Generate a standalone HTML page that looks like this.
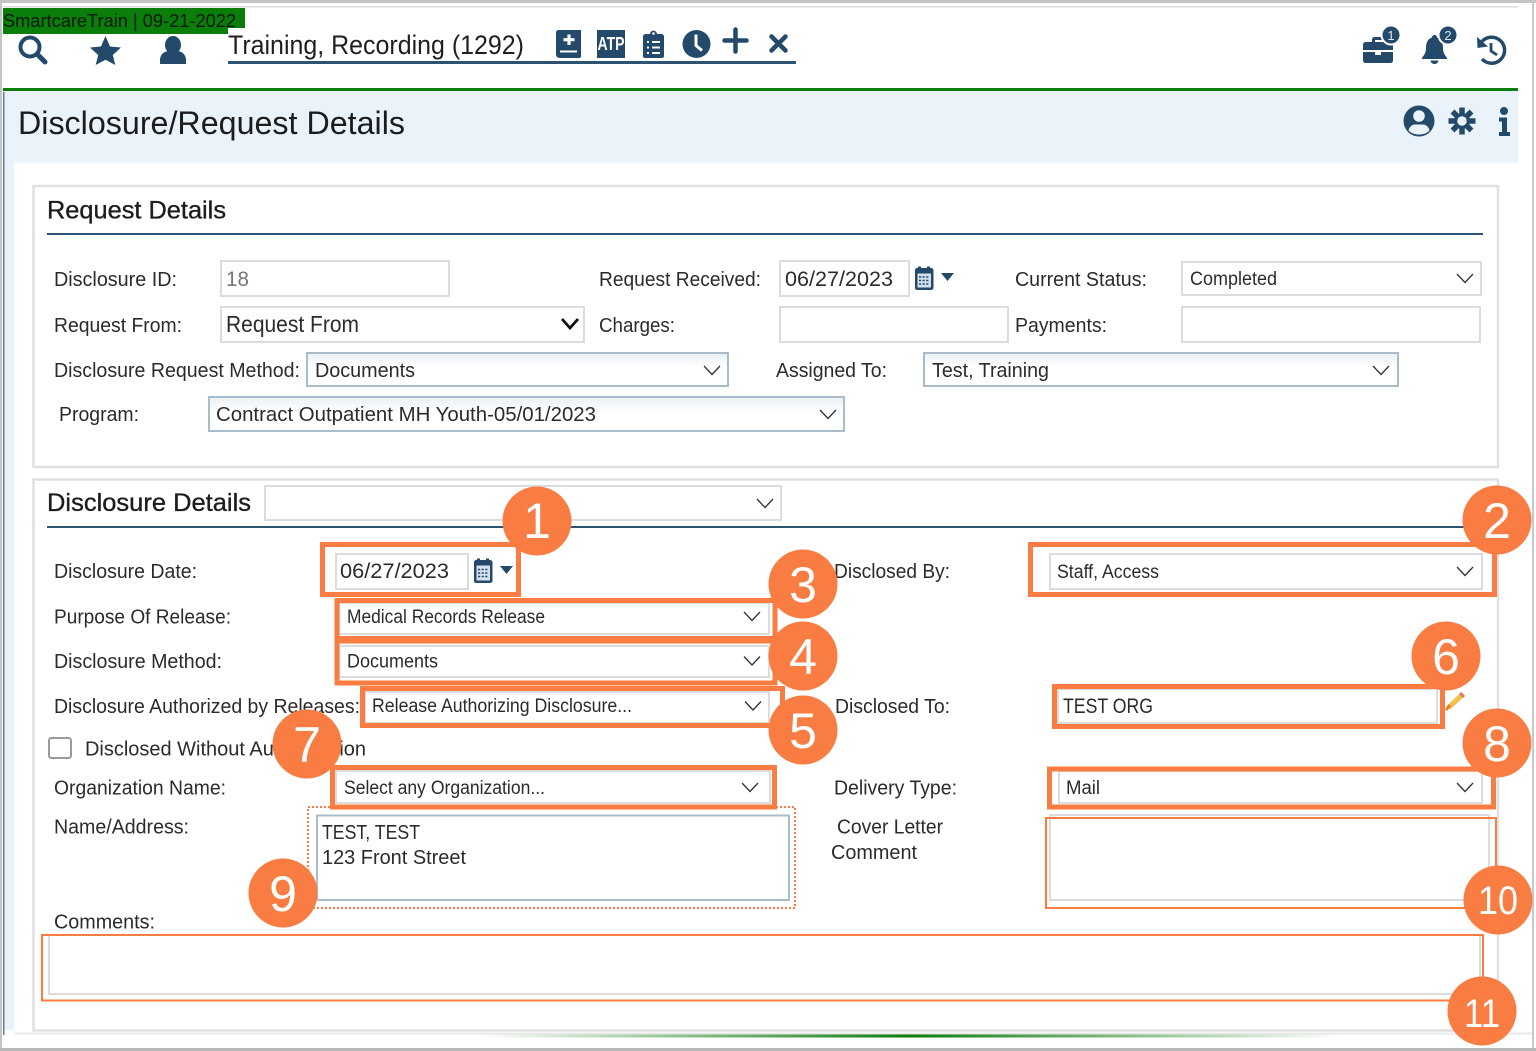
<!DOCTYPE html>
<html lang="en">
<head>
<meta charset="utf-8">
<title>Disclosure/Request Details</title>
<style>
html,body{margin:0;padding:0;background:#fff;width:1536px;height:1051px;overflow:hidden}
svg{display:block}
text{font-family:"Liberation Sans",Arial,sans-serif;fill:#2b2b2b;font-size:20px}
.v{font-size:19px}
.big{font-size:21px}
.n{fill:#fff;font-size:50px;text-anchor:middle}
.h{font-size:25px;fill:#1c1c1c;stroke:#1c1c1c;stroke-width:.35}
.g{fill:#fff;stroke:#dcdcdc;stroke-width:2}
.b{fill:url(#grad);stroke:#a9bccb;stroke-width:2}
.c{fill:none;stroke:#333;stroke-width:1.3}
.o{fill:none;stroke:#f97d42;stroke-width:5}
.o2{fill:none;stroke:#f97d42;stroke-width:2}
.d{fill:#234a6b}
.ds{fill:none;stroke:#234a6b}
</style>
</head>
<body>
<svg width="1536" height="1051" viewBox="0 0 1536 1051" xmlns="http://www.w3.org/2000/svg">
<defs>
<linearGradient id="grad" x1="0" y1="0" x2="0" y2="1"><stop offset="0" stop-color="#eaf0f5"/><stop offset=".45" stop-color="#fff"/></linearGradient>
<linearGradient id="bar" x1="0" y1="0" x2="1" y2="0"><stop offset="0" stop-color="#0a7d0a" stop-opacity="0"/><stop offset=".5" stop-color="#0a7d0a"/><stop offset="1" stop-color="#0a7d0a" stop-opacity="0"/></linearGradient>
</defs>

<!-- frame -->
<rect width="1536" height="1051" fill="#fff"/>
<rect x="0" y="0" width="1536" height="3" fill="#c4c4c4"/>
<rect x="3" y="6" width="1515" height="1.5" fill="#dedede"/>
<rect x="0" y="0" width="2" height="1051" fill="#c4c4c4"/>
<rect x="1532" y="0" width="2" height="1051" fill="#c8c8c8"/>
<rect x="0" y="1048" width="1536" height="3" fill="#b8b8b8"/>

<!-- green env tag -->
<rect x="3" y="8" width="242" height="20" fill="#0a7d0a"/>
<rect x="3" y="28" width="225" height="6" fill="#0a7d0a"/>
<text x="3" y="27" textLength="233" lengthAdjust="spacingAndGlyphs" style="font-size:18px;fill:#071a07">SmartcareTrain | 09-21-2022</text>

<!-- left nav icons -->
<circle cx="30" cy="47" r="9.5" class="ds" stroke-width="4"/>
<path d="M37 54L45 62" class="ds" stroke-width="5" stroke-linecap="round"/>
<path class="d" d="M105.500 36L110 46.500L121 47.500L112.800 55L115.300 65L105.500 59.800L95.700 65L98.200 55L90 47.500L101 46.500Z"/>
<ellipse cx="173" cy="45" rx="8" ry="9" class="d"/>
<path class="d" d="M160 64V60C160 54 165 51 169 51H177C181 51 186 54 186 60V64Z"/>

<!-- patient title -->
<text x="228" y="54" textLength="296" lengthAdjust="spacingAndGlyphs" style="font-size:27px;fill:#1f1f1f">Training, Recording (1292)</text>
<rect x="228" y="61" width="568" height="3" fill="#2d5373"/>

<!-- book plus -->
<path class="d" d="M559 30H581V56C581 57.500 580 58 579 58H560C557.500 58 556 56.500 556 54V33C556 31 557 30 559 30Z"/>
<path d="M569 34.500V45M563.500 39.700H574.500" stroke="#fff" stroke-width="3.200" fill="none"/>
<path d="M560 51.500H577" stroke="#fff" stroke-width="2" fill="none"/>
<!-- ATP -->
<rect x="597" y="30" width="28" height="28" class="d"/>
<text x="611" y="50" text-anchor="middle" textLength="27" lengthAdjust="spacingAndGlyphs" style="font-size:18px;font-weight:bold;fill:#fff">ATP</text>
<!-- clipboard -->
<path class="d" d="M646 34H650C650.500 29.500 656.500 29.500 657 34H661C663 34 664 35 664 37V56C664 57.500 663 58 661.500 58H645.500C644 58 643 57.500 643 56V37C643 35 644 34 646 34Z"/>
<path d="M647 42H649M652 42H660M647 47.500H649M652 47.500H660M647 53H649M652 53H660" stroke="#fff" stroke-width="2" fill="none"/>
<circle cx="653.500" cy="33.500" r="1.300" fill="#fff"/>
<!-- clock -->
<circle cx="696.500" cy="44" r="14" class="d"/>
<path d="M696 34.500V45.500L702 50.500" stroke="#fff" stroke-width="3" fill="none"/>
<!-- plus / x -->
<path d="M735.500 29.500V51.500M724.500 40.500H746.500" class="ds" stroke-width="4.500" stroke-linecap="round"/>
<path d="M771.500 36.500L785.500 50.500M785.500 36.500L771.500 50.500" class="ds" stroke-width="4.500" stroke-linecap="round"/>

<!-- right icons -->
<path class="d" d="M1372 42V40C1372 38 1373 37 1375 37H1384C1386 37 1387 38 1387 40V42H1390C1392 42 1393 43 1393 45V50H1363V45C1363 43 1364 42 1366 42ZM1375 42H1384V40H1375Z" fill-rule="evenodd"/>
<path class="d" d="M1363 52H1375V55H1381V52H1393V60C1393 62 1392 63 1390 63H1366C1364 63 1363 62 1363 60Z"/>
<circle cx="1391" cy="35" r="10.500" fill="#fff"/><circle cx="1391" cy="35" r="8.500" class="d"/>
<text x="1391" y="40" text-anchor="middle" style="font-size:13px;fill:#dfe8ef">1</text>
<path class="d" d="M1434.500 35C1436 35 1437 36 1437 37.500C1442 39 1443 44 1443 48C1443 53 1445 55 1447 58V59H1422V58C1424 55 1426 53 1426 48C1426 44 1427 39 1432 37.500C1432 36 1433 35 1434.500 35Z"/>
<path class="d" d="M1430.500 60.500H1438.500C1438 63 1436.500 64 1434.500 64C1432.500 64 1431 63 1430.500 60.500Z"/>
<circle cx="1448" cy="35" r="10.500" fill="#fff"/><circle cx="1448" cy="35" r="8.500" class="d"/>
<text x="1448" y="40" text-anchor="middle" style="font-size:13px;fill:#dfe8ef">2</text>
<path d="M1481.500 42A13 13 0 1 1 1482 59" class="ds" stroke-width="3.500"/>
<path class="d" d="M1477 37L1488 46.500L1477.500 48Z"/>
<path d="M1491 43V51L1497 55" class="ds" stroke-width="2.800"/>

<!-- green rule + blue header -->
<rect x="3" y="88" width="1515" height="3" fill="#0a7d0a"/>
<rect x="3" y="91" width="1515" height="71.500" fill="#eaf2fa"/>
<rect x="4" y="162" width="10" height="868" fill="#eaf2fa"/>
<rect x="3" y="92" width="1.500" height="943" fill="#5d7e97"/>
<text x="18" y="134" textLength="387" lengthAdjust="spacingAndGlyphs" style="font-size:32px;fill:#1c1c1c">Disclosure/Request Details</text>

<!-- page icons -->
<circle cx="1419" cy="121" r="15.500" class="d"/>
<circle cx="1419" cy="116" r="5.800" fill="#eaf2fa"/>
<path fill="#eaf2fa" d="M1408.500 130.500C1409.500 126 1413 124.500 1415 124.500H1423C1425 124.500 1428.500 126 1429.500 130.500C1426.500 133.500 1423 134.500 1419 134.500C1415 134.500 1411.500 133.500 1408.500 130.500Z"/>
<circle cx="1462" cy="121" r="8" class="d"/>
<path d="M1462 107.500V134.500M1448.500 121H1475.500M1452.500 111.500L1471.500 130.500M1471.500 111.500L1452.500 130.500" class="ds" stroke-width="5.500"/>
<circle cx="1462" cy="121" r="4.800" fill="#eaf2fa"/>
<circle cx="1504" cy="111" r="4" class="d"/>
<path class="d" d="M1499 117.500H1507V132H1510V136H1499V132H1502V121.500H1499Z"/>

<!-- panels -->
<rect x="33.500" y="186" width="1464.500" height="281" fill="#fff" stroke="#e0e0e0" stroke-width="2.500"/>
<rect x="33.500" y="479.500" width="1464.500" height="551" fill="#fff" stroke="#e0e0e0" stroke-width="2.500"/>
<rect x="14" y="1032.500" width="1518" height="2" fill="#e8e8e8"/>
<rect x="480" y="1034.500" width="860" height="3" fill="url(#bar)"/>

<text class="h" x="47" y="218.500" textLength="179" lengthAdjust="spacingAndGlyphs">Request Details</text>
<rect x="47" y="233" width="1436" height="2" fill="#2d5373"/>
<text class="h" x="47" y="511" textLength="204" lengthAdjust="spacingAndGlyphs">Disclosure Details</text>
<rect x="47" y="526" width="1451" height="2" fill="#2d5373"/>

<!-- Request details row 1 -->
<text x="54" y="286" textLength="123" lengthAdjust="spacingAndGlyphs">Disclosure ID:</text>
<rect class="g" x="221" y="261" width="228" height="35"/>
<text x="226" y="286" textLength="23" lengthAdjust="spacingAndGlyphs" class="big" style="fill:#777">18</text>
<text x="599" y="286" textLength="162" lengthAdjust="spacingAndGlyphs">Request Received:</text>
<rect class="g" x="780" y="261" width="129" height="35"/>
<text x="785" y="286" textLength="108" lengthAdjust="spacingAndGlyphs" class="big">06/27/2023</text>
<path class="d" d="M915 270C915 269 916 268 917 268H918V266.500H921V268H927V266.500H930V268H931C932 268 933.500 269 933.500 270V288C933.500 289 932 290 931 290H917C916 290 915 289 915 288Z"/>
<rect x="917.500" y="273.500" width="13.500" height="14" fill="#d5e0ea"/>
<path d="M919 277H929.500M919 280.500H929.500M919 284H929.500" stroke="#234a6b" stroke-width="1.600" stroke-dasharray="2.200 1.400" fill="none"/>
<path class="d" d="M941 273H954L947.500 281Z"/>
<text x="1015" y="286" textLength="132" lengthAdjust="spacingAndGlyphs">Current Status:</text>
<rect class="g" x="1182" y="262" width="299" height="33"/>
<text x="1190" y="285" textLength="87" lengthAdjust="spacingAndGlyphs" class="v">Completed</text>
<path class="c" d="M1457 274L1465 282.500L1473 274"/>

<!-- row 2 -->
<text x="54" y="332" textLength="128" lengthAdjust="spacingAndGlyphs">Request From:</text>
<rect class="g" x="221" y="307" width="363" height="35"/>
<text x="226" y="332" textLength="133" lengthAdjust="spacingAndGlyphs" style="font-size:23px">Request From</text>
<path d="M562 319L570 328L578 319" fill="none" stroke="#111" stroke-width="2.800"/>
<text x="599" y="332" textLength="76" lengthAdjust="spacingAndGlyphs">Charges:</text>
<rect class="g" x="780" y="307" width="228" height="35"/>
<text x="1015" y="332" textLength="92" lengthAdjust="spacingAndGlyphs">Payments:</text>
<rect class="g" x="1182" y="307" width="298" height="35"/>

<!-- row 3 -->
<text x="54" y="377" textLength="246" lengthAdjust="spacingAndGlyphs">Disclosure Request Method:</text>
<rect class="b" x="307" y="353" width="421" height="33"/>
<text x="315" y="377" textLength="100" lengthAdjust="spacingAndGlyphs">Documents</text>
<path class="c" d="M704 366L712 374.500L720 366"/>
<text x="776" y="377" textLength="111" lengthAdjust="spacingAndGlyphs">Assigned To:</text>
<rect class="b" x="924" y="353" width="474" height="33"/>
<text x="932" y="377" textLength="117" lengthAdjust="spacingAndGlyphs">Test, Training</text>
<path class="c" d="M1373 366L1381 374.500L1389 366"/>

<!-- row 4 -->
<text x="59" y="421" textLength="80" lengthAdjust="spacingAndGlyphs">Program:</text>
<rect class="b" x="209" y="397" width="635" height="34"/>
<text x="216" y="421" textLength="380" lengthAdjust="spacingAndGlyphs">Contract Outpatient MH Youth-05/01/2023</text>
<path class="c" d="M820 410L828 418.500L836 410"/>

<!-- Disclosure select -->
<rect class="g" x="265" y="486" width="516" height="34"/>
<path class="c" d="M757 499L765 507.500L773 499"/>

<!-- Disclosure date -->
<text x="54" y="578" textLength="143" lengthAdjust="spacingAndGlyphs">Disclosure Date:</text>
<rect class="g" x="336" y="554" width="132" height="35"/>
<text x="340" y="578" textLength="109" lengthAdjust="spacingAndGlyphs" class="big">06/27/2023</text>
<path class="d" d="M474 562C474 561 475 560 476 560H477V558.500H480V560H486V558.500H489V560H490C491 560 492.500 561 492.500 562V581C492.500 582 491 583 490 583H476C475 583 474 582 474 581Z"/>
<rect x="476.500" y="565.500" width="13.500" height="15" fill="#d5e0ea"/>
<path d="M478 569.500H488.500M478 573H488.500M478 576.500H488.500" stroke="#234a6b" stroke-width="1.600" stroke-dasharray="2.200 1.400" fill="none"/>
<path class="d" d="M500 566H513L506.500 574Z"/>

<text x="834" y="578" textLength="116" lengthAdjust="spacingAndGlyphs">Disclosed By:</text>
<rect class="g" x="1050" y="554" width="432" height="35"/>
<text x="1057" y="578" textLength="102" lengthAdjust="spacingAndGlyphs" class="v">Staff, Access</text>
<path class="c" d="M1457 567L1465 575.500L1473 567"/>

<!-- Purpose / method / authorised -->
<text x="54" y="623.500" textLength="177" lengthAdjust="spacingAndGlyphs">Purpose Of Release:</text>
<rect class="g" x="339" y="603" width="430" height="31"/>
<text x="347" y="623" textLength="198" lengthAdjust="spacingAndGlyphs" class="v">Medical Records Release</text>
<path class="c" d="M744 612L752 620.500L760 612"/>

<text x="54" y="668" textLength="168" lengthAdjust="spacingAndGlyphs">Disclosure Method:</text>
<rect class="g" x="339" y="646" width="430" height="31"/>
<text x="347" y="667.500" textLength="91" lengthAdjust="spacingAndGlyphs" class="v">Documents</text>
<path class="c" d="M744 656.500L752 665L760 656.500"/>

<text x="54" y="713" textLength="306" lengthAdjust="spacingAndGlyphs">Disclosure Authorized by Releases:</text>
<rect class="g" x="365" y="692" width="404" height="31"/>
<text x="372" y="712" textLength="260" lengthAdjust="spacingAndGlyphs" class="v">Release Authorizing Disclosure...</text>
<path class="c" d="M745 701.500L753 710L761 701.500"/>

<text x="835" y="713" textLength="115" lengthAdjust="spacingAndGlyphs">Disclosed To:</text>
<rect class="g" x="1058" y="689" width="379" height="34"/>
<text x="1063" y="713" textLength="90" lengthAdjust="spacingAndGlyphs" class="big">TEST ORG</text>
<path d="M1448 708L1462 695" stroke="#f2c24a" stroke-width="5" fill="none"/>
<path d="M1460 693L1464 697" stroke="#d97a5a" stroke-width="3" fill="none"/>
<path d="M1446 710L1450 705" stroke="#d9803f" stroke-width="3" fill="none"/>

<!-- checkbox -->
<rect x="49" y="738" width="22" height="20" rx="2.500" fill="#fff" stroke="#9a9a9a" stroke-width="2"/>
<text x="85" y="755.500" textLength="281" lengthAdjust="spacingAndGlyphs">Disclosed Without Authorization</text>

<!-- Organisation / delivery -->
<text x="54" y="794.500" textLength="172" lengthAdjust="spacingAndGlyphs">Organization Name:</text>
<rect class="g" x="336" y="771" width="434" height="32"/>
<text x="344" y="794" textLength="201" lengthAdjust="spacingAndGlyphs" class="v">Select any Organization...</text>
<path class="c" d="M742 783L750 791.500L758 783"/>

<text x="834" y="794.500" textLength="123" lengthAdjust="spacingAndGlyphs">Delivery Type:</text>
<rect class="g" x="1059" y="771" width="423" height="32"/>
<text x="1066" y="794" textLength="34" lengthAdjust="spacingAndGlyphs" class="v">Mail</text>
<path class="c" d="M1457 783L1465 791.500L1473 783"/>

<!-- Name / address -->
<text x="54" y="833.500" textLength="135" lengthAdjust="spacingAndGlyphs">Name/Address:</text>
<rect x="317" y="815.500" width="472" height="84.500" fill="#fff" stroke="#a9bccb" stroke-width="2"/>
<text x="322" y="839" textLength="98" lengthAdjust="spacingAndGlyphs">TEST, TEST</text>
<text x="322" y="864" textLength="144" lengthAdjust="spacingAndGlyphs">123 Front Street</text>
<rect x="308" y="807" width="487" height="101" fill="none" stroke="#f97d42" stroke-width="2" stroke-dasharray="2 2"/>

<text x="837" y="833.500" textLength="106" lengthAdjust="spacingAndGlyphs">Cover Letter</text>
<text x="831" y="859" textLength="86" lengthAdjust="spacingAndGlyphs">Comment</text>
<rect class="g" x="1050" y="815" width="439" height="85"/>

<text x="54" y="928.500" textLength="101" lengthAdjust="spacingAndGlyphs">Comments:</text>
<rect class="g" x="49" y="935" width="1431" height="59"/>

<!-- orange highlight boxes -->
<rect class="o" x="322.500" y="544.500" width="196" height="50"/>
<rect class="o" x="1030.500" y="544.500" width="464" height="50"/>
<rect class="o" x="337" y="600.500" width="438" height="38"/>
<rect class="o" x="337" y="641" width="438" height="42"/>
<rect class="o" x="362.500" y="688.500" width="420" height="37"/>
<rect class="o" x="1054.500" y="686.500" width="388" height="40"/>
<rect class="o" x="332.500" y="767.500" width="442" height="39.500"/>
<rect class="o" x="1049.500" y="769" width="444" height="38"/>
<rect class="o2" x="1046" y="818" width="450" height="90"/>
<rect class="o2" x="42" y="935" width="1441" height="65.500"/>

<!-- numbered circles -->
<g fill="#f97d42">
<circle cx="537" cy="521" r="34.500"/>
<circle cx="1497" cy="520" r="34.500"/>
<circle cx="803" cy="584" r="34.500"/>
<circle cx="803" cy="656" r="34.500"/>
<circle cx="803" cy="730" r="34.500"/>
<circle cx="1446" cy="656" r="34.500"/>
<circle cx="307" cy="744" r="34.500"/>
<circle cx="1497" cy="743" r="34.500"/>
<circle cx="283" cy="893" r="34.500"/>
<circle cx="1498" cy="900" r="34.500"/>
<circle cx="1482" cy="1011" r="34.500"/>
</g>
<text class="n" x="537" y="538">1</text>
<text class="n" x="1497" y="538">2</text>
<text class="n" x="803" y="602">3</text>
<text class="n" x="803" y="674">4</text>
<text class="n" x="803" y="748">5</text>
<text class="n" x="1446" y="674">6</text>
<text class="n" x="307" y="762">7</text>
<text class="n" x="1497" y="761">8</text>
<text class="n" x="283" y="911">9</text>
<text class="n" x="1498" y="914" style="font-size:40px" textLength="40" lengthAdjust="spacingAndGlyphs">10</text>
<text class="n" x="1482" y="1027" style="font-size:40px" textLength="36" lengthAdjust="spacingAndGlyphs">11</text>
</svg>
</body>
</html>
